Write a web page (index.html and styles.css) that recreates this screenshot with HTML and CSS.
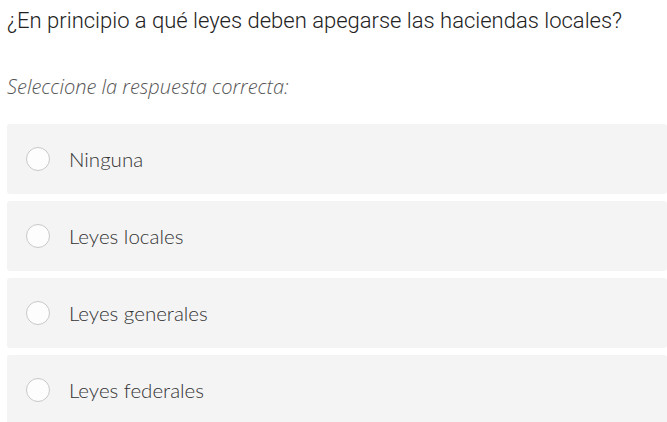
FILE: index.html
```html
<!DOCTYPE html>
<html lang="es">
<head>
<meta charset="utf-8">
<link rel="stylesheet" href="styles.css">
</head>
<body>
<div class="quiz">
  <h1 class="question">¿En principio a qué leyes deben apegarse las haciendas locales?</h1>
  <p class="hint">Seleccione la respuesta correcta:</p>
  <ul class="options">
    <li class="option"><span class="radio"></span><span class="label">Ninguna</span></li>
    <li class="option"><span class="radio"></span><span class="label">Leyes locales</span></li>
    <li class="option"><span class="radio"></span><span class="label">Leyes generales</span></li>
    <li class="option"><span class="radio"></span><span class="label">Leyes federales</span></li>
  </ul>
</div>
</body>
</html>
```
FILE: styles.css
```css
html, body { margin: 0; padding: 0; background: #fff; }
.quiz { padding: 0 0 0 7px; }
.question {
  margin: 0;
  padding-top: 6px;
  font-family: Roboto, sans-serif;
  font-weight: 300;
  font-size: 22px;
  line-height: 30px;
  color: #222;
}
.hint {
  margin: 38px 0 0 0;
  font-family: "Open Sans", sans-serif;
  font-style: italic;
  font-weight: 300;
  font-size: 20px;
  line-height: 26px;
  color: #555;
}
.options {
  list-style: none;
  margin: 24px 0 0 0;
  padding: 0;
  display: flex;
  flex-direction: column;
  gap: 7px;
}
.option {
  height: 70px;
  background: #f4f4f4;
  border-radius: 3px;
  display: flex;
  align-items: center;
  padding-left: 19px;
}
.radio {
  width: 22px;
  height: 22px;
  border: 1px solid #c8c8c8;
  border-radius: 50%;
  background: #fdfdfd;
  flex: none;
}
.label {
  margin-left: 19px;
  font-family: Lato, sans-serif;
  font-weight: 300;
  font-size: 20.5px;
  color: #333;
}
```
